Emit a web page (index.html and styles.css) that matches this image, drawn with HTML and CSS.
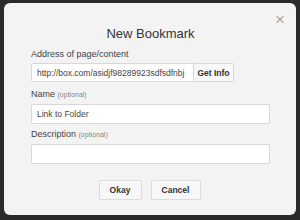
FILE: index.html
```html
<!DOCTYPE html>
<html lang="en">
<head>
    <meta charset="UTF-8">
    <title>New Bookmark</title>
    <link rel="stylesheet" href="styles.css">
</head>
<body>
    <div class="modal">
        <span class="close">&times;</span>
        <h2 class="title">New Bookmark</h2>

        <label class="label">Address of page/content</label>
        <div class="url-row">
            <input class="field url" type="text" value="http://box.com/asidjf98289923sdfsdfnbj">
            <button class="get-info">Get Info</button>
        </div>

        <label class="label">Name <small>(optional)</small></label>
        <input class="field" type="text" value="Link to Folder">

        <label class="label">Description <small>(optional)</small></label>
        <input class="field" type="text" value="">

        <div class="actions">
            <button class="btn okay">Okay</button>
            <button class="btn cancel">Cancel</button>
        </div>
    </div>
</body>
</html>
```

FILE: styles.css
```css
body {
    margin: 0;
    background-color: #2a2a2a;
    font-family: "Liberation Sans", Arial, sans-serif;
}

.modal {
    position: relative;
    box-sizing: border-box;
    width: 292px;
    height: 212px;
    margin: 3px 0 0 4px;
    padding: 21px 26px 0 27px;
    background-color: #f3f3f3;
    border-radius: 6px;
    display: flex;
    flex-direction: column;
}

.close {
    position: absolute;
    top: 8px;
    right: 11px;
    font-size: 17px;
    line-height: 17px;
    color: #a8a8a8;
}

.title {
    margin: 0;
    font-size: 13px;
    line-height: 20px;
    font-weight: normal;
    text-align: center;
    color: #333;
}

.label {
    display: block;
    margin-top: 3px;
    margin-bottom: 2px;
    font-size: 9px;
    line-height: 14px;
    color: #444;
}

.label small {
    font-size: 7px;
    color: #888;
}

.url-row {
    display: flex;
    height: 19px;
    margin-bottom: 2px;
}

.field {
    box-sizing: border-box;
    width: 100%;
    height: 20px;
    margin: 0;
    padding: 0 5px;
    font-family: inherit;
    font-size: 8.5px;
    color: #444;
    background-color: #fff;
    border: 1px solid #d8d8d8;
    border-radius: 2px;
}

.field.url {
    width: 163px;
    height: 19px;
    border-radius: 2px 0 0 2px;
}

.get-info {
    box-sizing: border-box;
    width: 40px;
    height: 19px;
    margin: 0;
    padding: 0;
    font-family: inherit;
    font-size: 8.5px;
    font-weight: bold;
    color: #333;
    background-color: #f8f8f8;
    border: 1px solid #d8d8d8;
    border-left: none;
    border-radius: 0 2px 2px 0;
}

.actions {
    display: flex;
    justify-content: center;
    gap: 9px;
    margin-top: 16px;
    margin-left: -2px;
}

.btn {
    box-sizing: border-box;
    height: 20px;
    padding: 0;
    font-family: inherit;
    font-size: 8.5px;
    font-weight: bold;
    color: #333;
    background-color: #f7f7f7;
    border: 1px solid #dcdcdc;
    border-radius: 2px;
}

.okay {
    width: 43px;
}

.cancel {
    width: 50px;
}
```
